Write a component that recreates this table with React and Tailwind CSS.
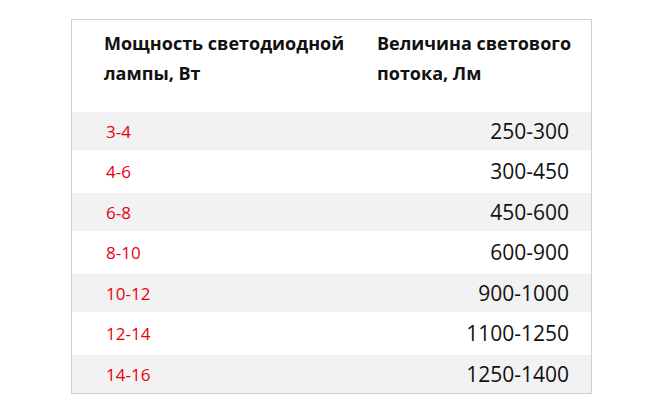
const ROWS = [
  ["3-4", "250-300"],
  ["4-6", "300-450"],
  ["6-8", "450-600"],
  ["8-10", "600-900"],
  ["10-12", "900-1000"],
  ["12-14", "1100-1250"],
  ["14-16", "1250-1400"],
];

export default function App() {
  return (
    <div className="h-[419px] w-[663px] bg-white pl-[71px] pt-[19px]" style={{ fontFamily: '"Open Sans", "Noto Sans", sans-serif' }}>
      <div className="w-[521px] border border-[#cfcfcf] bg-white">
        {/* header */}
        <div className="flex h-[92px] pl-[32px] pt-[8px] text-[18px] font-bold leading-[30px] text-[#111]">
          <div className="w-[273px]">
            Мощность светодиодной
            <br />
            лампы, Вт
          </div>
          <div>
            Величина светового
            <br />
            потока, Лм
          </div>
        </div>
        {ROWS.map(([w, lm], i) => (
          <div
            key={w}
            className={`flex items-center justify-between pl-[34px] pr-[22px] ${
              i % 2 === 0 ? "h-[38px] bg-[#f2f2f2]" : "h-[43px] bg-white"
            }`}
          >
            <span className="text-[17px] leading-none text-[#e8000c]">{w}</span>
            <span className="text-[21px] leading-none text-[#111]">{lm}</span>
          </div>
        ))}
      </div>
    </div>
  );
}
